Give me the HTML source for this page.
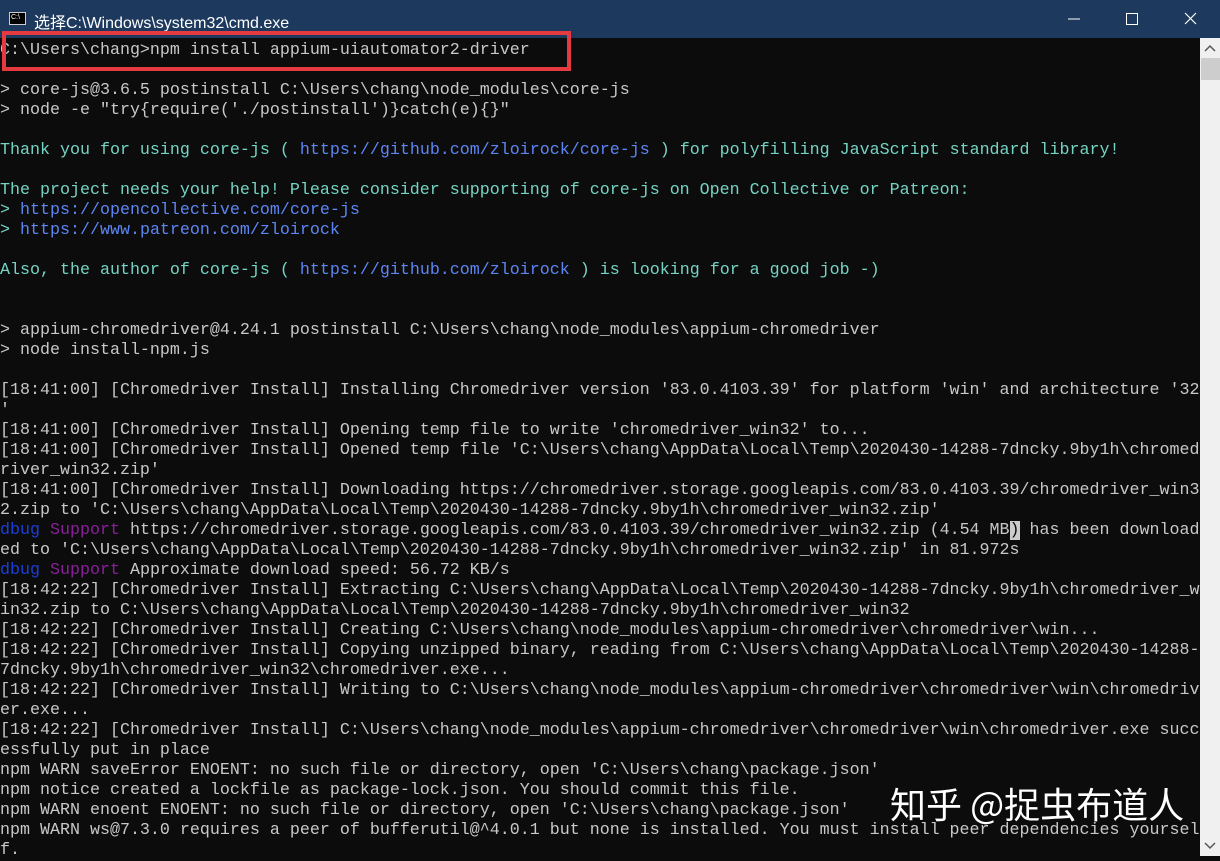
<!DOCTYPE html>
<html><head><meta charset="utf-8"><style>
*{margin:0;padding:0;box-sizing:border-box}
body{width:1220px;height:856px;overflow:hidden;background:#0c0c0c;position:relative;font-family:"Liberation Mono","Noto Sans CJK SC",monospace}
#tb{position:absolute;left:0;top:0;width:1220px;height:38px;background:#1d3a5e;color:#fff;font-family:"Liberation Sans","Noto Sans CJK SC",sans-serif;font-size:16px}
#tb .t{position:absolute;left:34px;top:9px}
#tb .ic{position:absolute;left:9px;top:12px;width:17px;height:13px;border:1px solid #ccc;background:#000;color:#fff;font-size:7px;line-height:10px;padding-left:1px}
#term{position:absolute;left:0;top:41px;width:1200px;color:#c8c8c8;font-size:16.67px;line-height:20px;white-space:pre;overflow:hidden}
.c{color:#74d4c4}.b{color:#5d86f5}.d{color:#1a3fd8}.p{color:#8a1f9a}
#sb{position:absolute;left:1200px;top:38px;width:20px;height:818px;background:#f0f0f0}
#thumb{position:absolute;left:1201px;top:58px;width:19px;height:22px;background:#cdcdcd}
#box{position:absolute;left:2px;top:31px;width:569px;height:40px;border:4px solid #e53a3f}
#wm{position:absolute;left:890px;top:780px;color:#fff;font-family:"Noto Sans CJK SC",sans-serif;font-size:36px;line-height:46px}
</style></head><body>
<div id="tb"><div class="ic">C:\</div><div class="t">选择C:\Windows\system32\cmd.exe</div>
<svg style="position:absolute;left:1060px;top:8px" width="150" height="22">
<line x1="8" y1="11" x2="20" y2="11" stroke="#fff" stroke-width="1"/>
<rect x="66.5" y="5.5" width="11" height="11" fill="none" stroke="#fff" stroke-width="1"/>
<path d="M125 5 L136 16 M136 5 L125 16" stroke="#fff" stroke-width="1.2"/>
</svg></div>
<div id="term">C:\Users\chang&gt;npm install appium-uiautomator2-driver

&gt; core-js@3.6.5 postinstall C:\Users\chang\node_modules\core-js
&gt; node -e "try{require('./postinstall')}catch(e){}"

<span class="c">Thank you for using core-js ( </span><span class="b">https://github.com/zloirock/core-js</span><span class="c"> ) for polyfilling JavaScript standard library!</span>

<span class="c">The project needs your help! Please consider supporting of core-js on Open Collective or Patreon:</span>
<span class="c">&gt; </span><span class="b">https://opencollective.com/core-js</span>
<span class="c">&gt; </span><span class="b">https://www.patreon.com/zloirock</span>

<span class="c">Also, the author of core-js ( </span><span class="b">https://github.com/zloirock</span><span class="c"> ) is looking for a good job -)</span>


&gt; appium-chromedriver@4.24.1 postinstall C:\Users\chang\node_modules\appium-chromedriver
&gt; node install-npm.js

[18:41:00] [Chromedriver Install] Installing Chromedriver version '83.0.4103.39' for platform 'win' and architecture '32
'
[18:41:00] [Chromedriver Install] Opening temp file to write 'chromedriver_win32' to...
[18:41:00] [Chromedriver Install] Opened temp file 'C:\Users\chang\AppData\Local\Temp\2020430-14288-7dncky.9by1h\chromed
river_win32.zip'
[18:41:00] [Chromedriver Install] Downloading https://chromedriver.storage.googleapis.com/83.0.4103.39/chromedriver_win3
2.zip to 'C:\Users\chang\AppData\Local\Temp\2020430-14288-7dncky.9by1h\chromedriver_win32.zip'
<span class="d">dbug</span> <span class="p">Support</span> https://chromedriver.storage.googleapis.com/83.0.4103.39/chromedriver_win32.zip (4.54 MB<span style="background:#ccc;color:#0c0c0c">)</span> has been download
ed to 'C:\Users\chang\AppData\Local\Temp\2020430-14288-7dncky.9by1h\chromedriver_win32.zip' in 81.972s
<span class="d">dbug</span> <span class="p">Support</span> Approximate download speed: 56.72 KB/s
[18:42:22] [Chromedriver Install] Extracting C:\Users\chang\AppData\Local\Temp\2020430-14288-7dncky.9by1h\chromedriver_w
in32.zip to C:\Users\chang\AppData\Local\Temp\2020430-14288-7dncky.9by1h\chromedriver_win32
[18:42:22] [Chromedriver Install] Creating C:\Users\chang\node_modules\appium-chromedriver\chromedriver\win...
[18:42:22] [Chromedriver Install] Copying unzipped binary, reading from C:\Users\chang\AppData\Local\Temp\2020430-14288-
7dncky.9by1h\chromedriver_win32\chromedriver.exe...
[18:42:22] [Chromedriver Install] Writing to C:\Users\chang\node_modules\appium-chromedriver\chromedriver\win\chromedriv
er.exe...
[18:42:22] [Chromedriver Install] C:\Users\chang\node_modules\appium-chromedriver\chromedriver\win\chromedriver.exe succ
essfully put in place
npm WARN saveError ENOENT: no such file or directory, open 'C:\Users\chang\package.json'
npm notice created a lockfile as package-lock.json. You should commit this file.
npm WARN enoent ENOENT: no such file or directory, open 'C:\Users\chang\package.json'
npm WARN ws@7.3.0 requires a peer of bufferutil@^4.0.1 but none is installed. You must install peer dependencies yoursel
f.</div>
<div id="sb"></div><div id="thumb"></div>
<svg style="position:absolute;left:1200px;top:38px" width="20" height="20"><path d="M5 13 L10 8 L15 13" fill="none" stroke="#555" stroke-width="1.5"/></svg>
<svg style="position:absolute;left:1200px;top:836px" width="20" height="20"><path d="M5 7 L10 12 L15 7" fill="none" stroke="#555" stroke-width="1.5"/></svg>
<div id="box"></div>
<div id="wm">知乎 @捉虫布道人</div>
</body></html>
